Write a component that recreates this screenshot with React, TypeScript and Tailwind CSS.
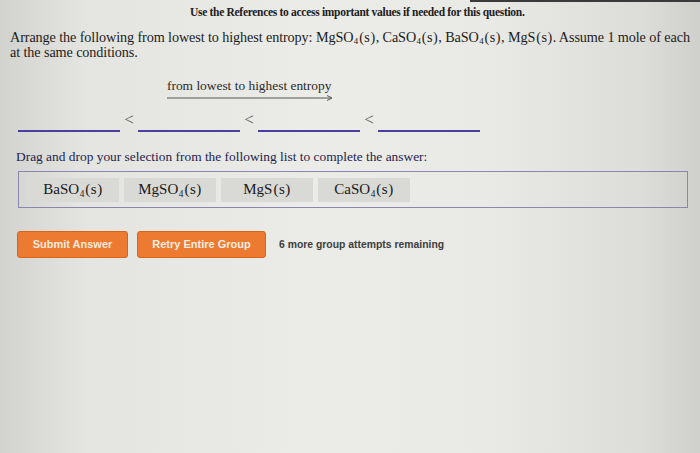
const serif = { fontFamily: '"Liberation Serif", "Times New Roman", serif' };

function Chem({ base, sub, tail }: { base: string; sub?: string; tail: string }) {
  return (
    <span className="whitespace-nowrap">
      {base}
      {sub ? <sub className="ml-[0.5px] text-[0.62em] leading-[0]">{sub}</sub> : null}
      <span className="ml-[1px] tracking-[0.5px]">{tail}</span>
    </span>
  );
}

const choices = [
  { base: 'BaSO', sub: '4', tail: '(s)' },
  { base: 'MgSO', sub: '4', tail: '(s)' },
  { base: 'MgS', tail: '(s)' },
  { base: 'CaSO', sub: '4', tail: '(s)' },
];

export default function App() {
  return (
    <div
      className="relative h-[453px] w-[700px] overflow-hidden bg-[linear-gradient(90deg,#d2d2ce_0%,#e4e4e0_12%,#ebebe7_45%,#e9e9e5_70%,#dcdcd8_92%,#cfcfcb_100%)] text-[#1c1c1c]"
      style={serif}
    >
      <div className="absolute right-0 top-0 h-[2px] w-[230px] bg-[#3a3a3a]" />

      <p className="pt-[5px] pl-[190px] text-[11.5px] font-bold leading-[14px] tracking-[-0.3px] text-[#202020]">
        Use the References to access important values if needed for this question.
      </p>

      <p className="mt-[11px] pl-[10px] pr-[4px] text-[14.2px] leading-[15px] tracking-[-0.1px]">
        Arrange the following from lowest to highest entropy: <Chem base="MgSO" sub="4" tail="(s)" />,{' '}
        <Chem base="CaSO" sub="4" tail="(s)" />, <Chem base="BaSO" sub="4" tail="(s)" />,{' '}
        <Chem base="MgS" tail="(s)" />. Assume 1 mole of each at the same conditions.
      </p>

      <div className="mt-[19px] ml-[167px] w-[166px]">
        <p className="text-[13.4px] leading-[14px] text-[#2a2a2a]">from lowest to highest entropy</p>
        <svg width="166" height="6" viewBox="0 0 166 6" className="mt-[2px] block">
          <line x1="0" y1="3" x2="164" y2="3" stroke="#555" strokeWidth="1" />
          <path d="M160 0.5 L165 3 L160 5.5" fill="none" stroke="#555" strokeWidth="1" />
        </svg>
      </div>

      <div className="mt-[12px] ml-[18px] flex items-end">
        {[0, 1, 2, 3].map((i) => (
          <div key={i} className="flex items-end">
            {i > 0 ? (
              <span className="mx-[4px] mb-[5px] w-[10px] text-center text-[17px] leading-[14px] text-[#666]">&lt;</span>
            ) : null}
            <div className="h-[2px] w-[102px] bg-[#4a3f9e]" />
          </div>
        ))}
      </div>

      <p className="mt-[17px] pl-[16px] text-[13.4px] leading-[15px] text-[#24244e]">
        Drag and drop your selection from the following list to complete the answer:
      </p>

      <div className="mt-[7px] ml-[18px] flex h-[37px] w-[670px] items-center gap-[5px] border-[1.5px] border-[#8a87ad] px-[8px]">
        {choices.map((c, i) => (
          <div
            key={i}
            className="flex h-[24px] w-[92px] items-center justify-center bg-[#d9d9d6] text-[15px] text-[#1a1a1a]"
          >
            <Chem base={c.base} sub={c.sub} tail={c.tail} />
          </div>
        ))}
      </div>

      <div
        className="mt-[23px] ml-[17px] flex items-center gap-[9px]"
        style={{ fontFamily: '"Liberation Sans", Arial, sans-serif' }}
      >
        <button className="h-[27px] w-[111px] rounded-[3px] border border-[#d9621c] bg-[#ec7a30] text-[11px] font-bold text-[#fde9dc]">
          Submit Answer
        </button>
        <button className="h-[27px] w-[129px] rounded-[3px] border border-[#d9621c] bg-[#ec7a30] text-[11px] font-bold text-[#fdeee4]">
          Retry Entire Group
        </button>
        <span className="ml-[4px] text-[10.4px] font-bold text-[#3e3e3e]">6 more group attempts remaining</span>
      </div>
    </div>
  );
}
